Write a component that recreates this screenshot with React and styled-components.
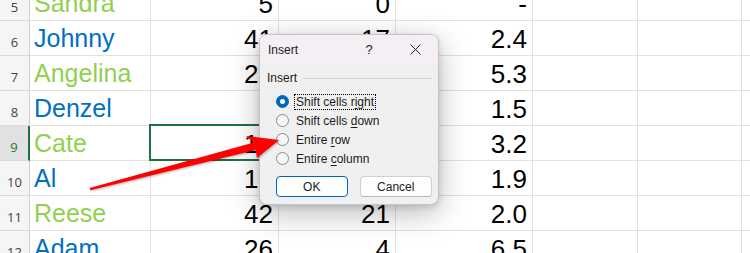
import React from 'react';
import styled, { createGlobalStyle } from 'styled-components';

const GlobalStyle = createGlobalStyle`
  html, body {
    margin: 0;
    padding: 0;
    background: #ffffff;
  }
  body {
    overflow: hidden;
  }
`

const Screen = styled.div`
  position: relative;
  width: 750px;
  height: 253px;
  overflow: hidden;
  background: #ffffff;
`

const Sheet = styled.div`
  display: flex;
  flex-direction: column;
  margin-top: -14px;
`

const Row = styled.div`
  display: grid;
  grid-template-columns: 30px 121px 128px 117px 137px 105px 104px 1fr;
  height: 35px;
`

const Cell = styled.div`
  position: relative;
  box-sizing: border-box;
  height: 35px;
  border-right: 1px solid #e1e1e1;
  border-bottom: 1px solid #e1e1e1;
  padding: 0 5px 0 4px;
  line-height: 34px;
  white-space: nowrap;
  overflow: visible;
`

const NameCell = styled(Cell)`
  font-family: "Liberation Sans", Arial, sans-serif;
  font-size: 25px;
  color: ${p => (p.$tone === 'blue' ? '#0070c0' : '#92d050')};
`

const NumCell = styled(Cell)`
  font-family: "Liberation Sans", Arial, sans-serif;
  font-size: 26px;
  color: #000000;
  text-align: right;
  padding-top: 1px;
  ${p => p.$selected && `
    &::after {
      content: '';
      position: absolute;
      top: -2px;
      left: -2px;
      right: -1px;
      bottom: -1px;
      border: 2px solid #1e7145;
    }
  `}
`

const HeadCell = styled.div`
  box-sizing: border-box;
  height: 35px;
  display: flex;
  align-items: flex-end;
  justify-content: center;
  padding-bottom: 5px;
  line-height: 16px;
  font-family: "Open Sans", "Noto Sans", sans-serif;
  font-size: 13px;
  background: ${p => (p.$active ? '#e1e1e1' : '#f5f5f5')};
  color: ${p => (p.$active ? '#1e7145' : '#444444')};
  border-bottom: 1px solid #dadada;
  border-right: ${p => (p.$active ? '2px solid #1e7145' : '1px solid #cfcfcf')};
`

const Dialog = styled.div`
  position: absolute;
  left: 259px;
  top: 34px;
  width: 180px;
  height: 171px;
  box-sizing: border-box;
  border: 1px solid #c4c4c4;
  border-radius: 8px;
  background: #f0f0f0;
  box-shadow: 0 8px 30px rgba(0, 0, 0, 0.28), 0 2px 6px rgba(0, 0, 0, 0.12);
  overflow: hidden;
  font-family: "Liberation Sans", Arial, sans-serif;
  font-size: 12px;
  color: #1b1b1b;
  display: flex;
  flex-direction: column;
`

const TitleBar = styled.div`
  display: flex;
  align-items: center;
  height: 29px;
  flex-shrink: 0;
  background: #f5eff5;
  padding-left: 8px;
`

const Title = styled.span`
  flex: 1;
`

const TitleButton = styled.div`
  width: 46px;
  height: 29px;
  display: flex;
  align-items: center;
  justify-content: center;
  font-size: 13px;
  color: #222;
`

const Body = styled.div`
  display: flex;
  flex-direction: column;
  padding: 6px 6px 0 7px;
`

const GroupHead = styled.div`
  display: flex;
  align-items: center;
  gap: 5px;
  height: 16px;
  line-height: 16px;
  &::after {
    content: '';
    flex: 1;
    height: 1px;
    background: #d6d6d6;
  }
`

const Options = styled.div`
  display: flex;
  flex-direction: column;
  margin: 6px 0 0 9px;
`

const Option = styled.div`
  display: flex;
  align-items: center;
  height: 19px;
  gap: 6px;
`

const Radio = styled.span`
  box-sizing: border-box;
  width: 13px;
  height: 13px;
  border-radius: 50%;
  flex-shrink: 0;
  display: flex;
  align-items: center;
  justify-content: center;
  border: 1px solid ${p => (p.$checked ? '#0067c0' : '#8a8a8a')};
  background: ${p => (p.$checked ? '#0067c0' : '#f7f7f7')};
  &::after {
    content: '';
    display: ${p => (p.$checked ? 'block' : 'none')};
    width: 5px;
    height: 5px;
    border-radius: 50%;
    background: #ffffff;
  }
`

const Label = styled.span`
  line-height: 14px;
  padding: 0 1px;
  white-space: nowrap;
  outline: ${p => (p.$focus ? '1px dotted #000' : 'none')};
  u {
    text-decoration-thickness: 1px;
    text-underline-offset: 2px;
  }
`

const Buttons = styled.div`
  display: flex;
  gap: 12px;
  margin: 8px 0 0 9px;
`

const Button = styled.div`
  box-sizing: border-box;
  width: ${p => (p.$primary ? '72px' : '73px')};
  height: 21px;
  border-radius: 4px;
  display: flex;
  align-items: center;
  justify-content: center;
  background: #fdfdfd;
  border: 1px solid ${p => (p.$primary ? '#0067c0' : '#d0d0d0')};
  border-bottom-color: ${p => (p.$primary ? '#0067c0' : '#b8b8b8')};
`

const Arrow = styled.svg`
  position: absolute;
  left: 0;
  top: 0;
  width: 750px;
  height: 253px;
  pointer-events: none;
  filter: drop-shadow(1px 1px 1px rgba(0, 0, 0, 0.3));
`

const rows = [
  { n: 5, name: 'Sandra', tone: 'green', b: '5', c: '0', d: '-' },
  { n: 6, name: 'Johnny', tone: 'blue', b: '41', c: '17', d: '2.4' },
  { n: 7, name: 'Angelina', tone: 'green', b: '26', c: '5', d: '5.3' },
  { n: 8, name: 'Denzel', tone: 'blue', b: '3', c: '2', d: '1.5' },
  { n: 9, name: 'Cate', tone: 'green', b: '16', c: '5', d: '3.2', selected: true },
  { n: 10, name: 'Al', tone: 'blue', b: '15', c: '8', d: '1.9' },
  { n: 11, name: 'Reese', tone: 'green', b: '42', c: '21', d: '2.0' },
  { n: 12, name: 'Adam', tone: 'blue', b: '26', c: '4', d: '6.5' },
];

const options = [
  { pre: 'Shift cells r', key: 'i', post: 'ght', checked: true },
  { pre: 'Shift cells ', key: 'd', post: 'own' },
  { pre: 'Entire ', key: 'r', post: 'ow' },
  { pre: 'Entire ', key: 'c', post: 'olumn' },
];

export default function App() {
  return (
    <Screen>
      <GlobalStyle />
      <Sheet>
        {rows.map(r => (
          <Row key={r.n}>
            <HeadCell $active={r.selected}>{r.n}</HeadCell>
            <NameCell $tone={r.tone}>{r.name}</NameCell>
            <NumCell $selected={r.selected}>{r.b}</NumCell>
            <NumCell>{r.c}</NumCell>
            <NumCell>{r.d}</NumCell>
            <Cell />
            <Cell />
            <Cell />
          </Row>
        ))}
      </Sheet>

      <Dialog>
        <TitleBar>
          <Title>Insert</Title>
          <TitleButton>?</TitleButton>
          <TitleButton>
            <svg width="11" height="11" viewBox="0 0 11 11">
              <path d="M0.5 0.5 L10.5 10.5 M10.5 0.5 L0.5 10.5" stroke="#222" strokeWidth="1" fill="none" />
            </svg>
          </TitleButton>
        </TitleBar>
        <Body>
          <GroupHead>Insert</GroupHead>
          <Options>
            {options.map((o, i) => (
              <Option key={i}>
                <Radio $checked={o.checked} />
                <Label $focus={o.checked}>
                  {o.pre}<u>{o.key}</u>{o.post}
                </Label>
              </Option>
            ))}
          </Options>
          <Buttons>
            <Button $primary>OK</Button>
            <Button>Cancel</Button>
          </Buttons>
        </Body>
      </Dialog>

      <Arrow viewBox="0 0 750 253">
        <polygon
          points="89.7,188 253.9,142.6 246,136 279,140 257,158 255.7,150 90.3,190.2"
          fill="#ff0000"
        />
      </Arrow>
    </Screen>
  );
}
